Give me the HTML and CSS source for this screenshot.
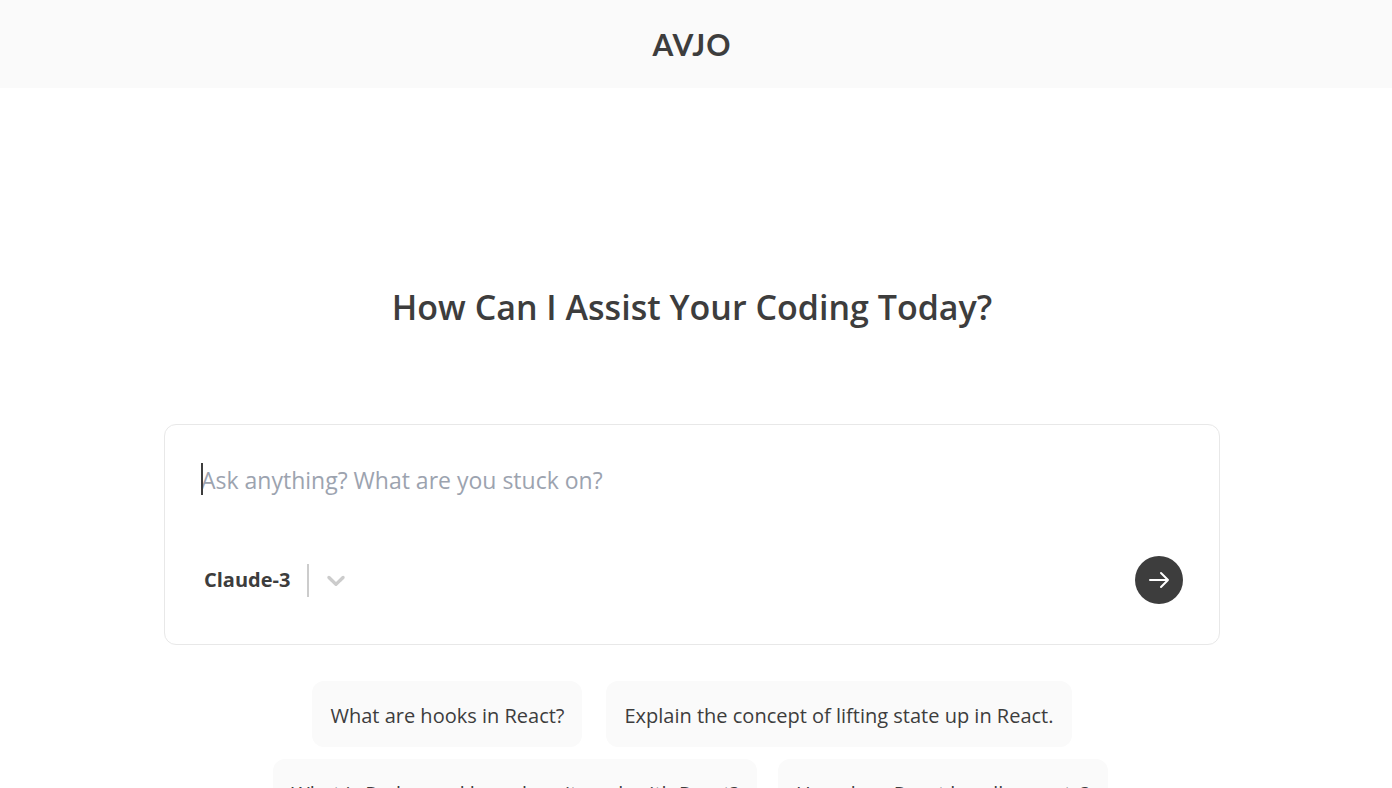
FILE: index.html
```html
<!DOCTYPE html>
<html lang="en">
<head>
<meta charset="utf-8">
<meta name="viewport" content="width=device-width, initial-scale=1">
<title>AVJO</title>
<link rel="stylesheet" href="styles.css">
</head>
<body>
<header class="topbar"><span class="brand">AVJO</span></header>
<main class="main">
  <h1 class="title">How Can I Assist Your Coding Today?</h1>
  <form class="composer">
    <div class="prompt">
      <span class="caret"></span>
      <textarea class="prompt-input" rows="1" aria-label="Your question" placeholder="Ask anything? What are you stuck on?"></textarea>
    </div>
    <div class="toolbar">
      <div class="model">
        <select class="model-select" aria-label="Model"><option>Claude-3</option></select>
        <span class="divider"></span>
        <svg class="chevron" viewBox="0 0 20 20" aria-hidden="true"><path d="M4.516 7.548c0.436-0.446 1.043-0.481 1.576 0l3.908 3.747 3.908-3.747c0.533-0.481 1.141-0.446 1.574 0 0.436 0.445 0.408 1.197 0 1.615-0.406 0.418-4.695 4.502-4.695 4.502-0.217 0.223-0.502 0.335-0.787 0.335s-0.57-0.112-0.789-0.335c0 0-4.287-4.084-4.695-4.502s-0.436-1.17 0-1.615z"/></svg>
      </div>
      <button class="send" type="submit" aria-label="Send">
        <svg class="arrow" viewBox="0 0 24 24" aria-hidden="true"><path d="M3 12H21M14 5L21 12L14 19"/></svg>
      </button>
    </div>
  </form>
  <div class="suggestions">
    <div class="row">
      <button class="chip" type="button">What are hooks in React?</button>
      <button class="chip" type="button">Explain the concept of lifting state up in React.</button>
    </div>
    <div class="row row-tight">
      <button class="chip" type="button">What is Redux and how does it work with React?</button>
      <button class="chip" type="button">How does React handle events?</button>
    </div>
  </div>
</main>
</body>
</html>
```

FILE: styles.css
```css
* { box-sizing: border-box; }
body {
  margin: 0;
  height: 100vh;
  overflow: hidden;
  background: #fff;
  color: #3d3d3d;
  font-family: "Segoe UI", "Open Sans", "Noto Sans", sans-serif;
}
.topbar {
  display: flex;
  justify-content: center;
  align-items: center;
  height: 88px;
  padding-right: 8px;
  background: #fafafa;
}
.brand { font-family: "Segoe UI", Lato, sans-serif; font-size: 30px; font-weight: 700; line-height: 40px; letter-spacing: 1px; }
.main {
  display: flex;
  flex-direction: column;
  align-items: center;
  padding: 192px 172px 0 164px;
}
.title { margin: 0; font-size: 34px; font-weight: 600; line-height: 54px; white-space: nowrap; }
.composer {
  width: 100%;
  margin-top: 90px;
  padding: 36px;
  border: 1px solid #e8e8e8;
  border-radius: 12px;
}
.prompt { position: relative; display: flex; }
.prompt-input {
  flex: 1;
  height: 72px;
  padding: 0;
  border: 0;
  outline: 0;
  resize: none;
  background: transparent;
  color: inherit;
  font: inherit;
  font-size: 23px;
  line-height: 38px;
}
.prompt-input::placeholder { color: #9ca3af; opacity: 1; }
.caret { position: absolute; left: 0; top: 2px; width: 2px; height: 32px; background: #3d3d3d; }
.toolbar { display: flex; justify-content: space-between; align-items: center; height: 48px; margin: 23px 0 4px; }
.model { display: flex; align-items: center; padding-left: 3px; }
.model-select {
  appearance: none;
  padding: 0;
  border: 0;
  background: transparent;
  color: inherit;
  font: inherit;
  font-size: 20px;
  font-weight: 700;
  line-height: 30px;
}
.divider { width: 2px; height: 33px; margin: 0 12px 0 16px; background: #ccc; }
.chevron { width: 30px; height: 30px; fill: #ccc; }
.send {
  display: flex;
  align-items: center;
  justify-content: center;
  width: 48px;
  height: 48px;
  padding: 0;
  border: 0;
  border-radius: 50%;
  background: #3d3d3d;
}
.arrow { width: 24px; height: 24px; fill: none; stroke: #fff; stroke-width: 2; stroke-linecap: round; stroke-linejoin: round; }
.suggestions { display: flex; flex-direction: column; gap: 12px; margin-top: 36px; }
.row { display: flex; justify-content: center; gap: 24px; }
.row-tight { gap: 21px; padding-right: 3px; }
.chip {
  height: 66px;
  padding: 2px 18px 0;
  border: 0;
  border-radius: 12px;
  background: #fafafa;
  color: inherit;
  font: inherit;
  font-size: 20px;
  white-space: nowrap;
}
```
